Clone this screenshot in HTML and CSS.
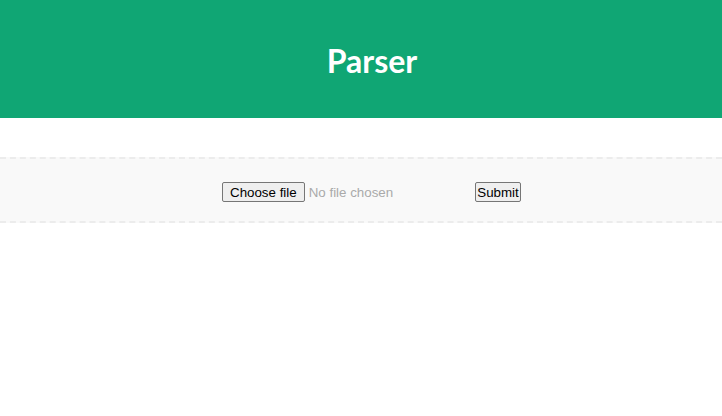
FILE: index.html
```html
<!DOCTYPE html>
<html>
<head>
<meta charset="utf-8">
<title>Parser</title>
<link rel="stylesheet" href="styles.css">
</head>
<body>
<header class="masthead">
  <h1 class="title">Parser</h1>
</header>
<main>
  <form class="upload">
    <label class="picker">
      <input class="file-input" type="file" name="file">
      <span class="pick-button">Choose file</span>
      <span class="pick-status">No file chosen</span>
    </label>
    <button class="submit" type="submit">Submit</button>
  </form>
</main>
</body>
</html>
```

FILE: styles.css
```css
html, body {
  margin: 0;
  padding: 0;
  background: #ffffff;
}

body {
  font-family: "Lato", "Open Sans", sans-serif;
}

.masthead {
  background: #10a674;
  height: 118px;
  display: flex;
  align-items: center;
  justify-content: center;
  padding-left: 22px;
  box-sizing: border-box;
}

.title {
  margin: 0;
  color: #ffffff;
  font-size: 32px;
  font-weight: 700;
  line-height: 1;
  padding-top: 3px;
}

.upload {
  margin-top: 39px;
  background: #f9f9f9;
  border-top: 2px dashed #ececec;
  border-bottom: 2px dashed #ececec;
  height: 66px;
  display: flex;
  align-items: center;
  justify-content: center;
  padding-left: 21px;
  padding-top: 4px;
  box-sizing: border-box;
  font-family: "Liberation Sans", Arial, sans-serif;
  font-size: 13.333px;
}

.picker {
  width: 253px;
  display: flex;
  align-items: center;
  cursor: pointer;
}

.file-input {
  display: none;
}

.pick-button {
  height: 20px;
  box-sizing: border-box;
  display: inline-flex;
  align-items: center;
  color: #000000;
  background: #efefef;
  border: 1px solid #767676;
  border-radius: 2px;
  padding: 0 7px;
}

.pick-status {
  margin-left: 4px;
  color: #aaaaaa;
}

.submit {
  font-family: inherit;
  font-size: 13.333px;
  height: 20px;
  width: 46px;
  box-sizing: border-box;
  color: #000000;
  background: #efefef;
  border: 1px solid #767676;
  border-radius: 2px;
  padding: 0;
  margin: 0;
}
```
